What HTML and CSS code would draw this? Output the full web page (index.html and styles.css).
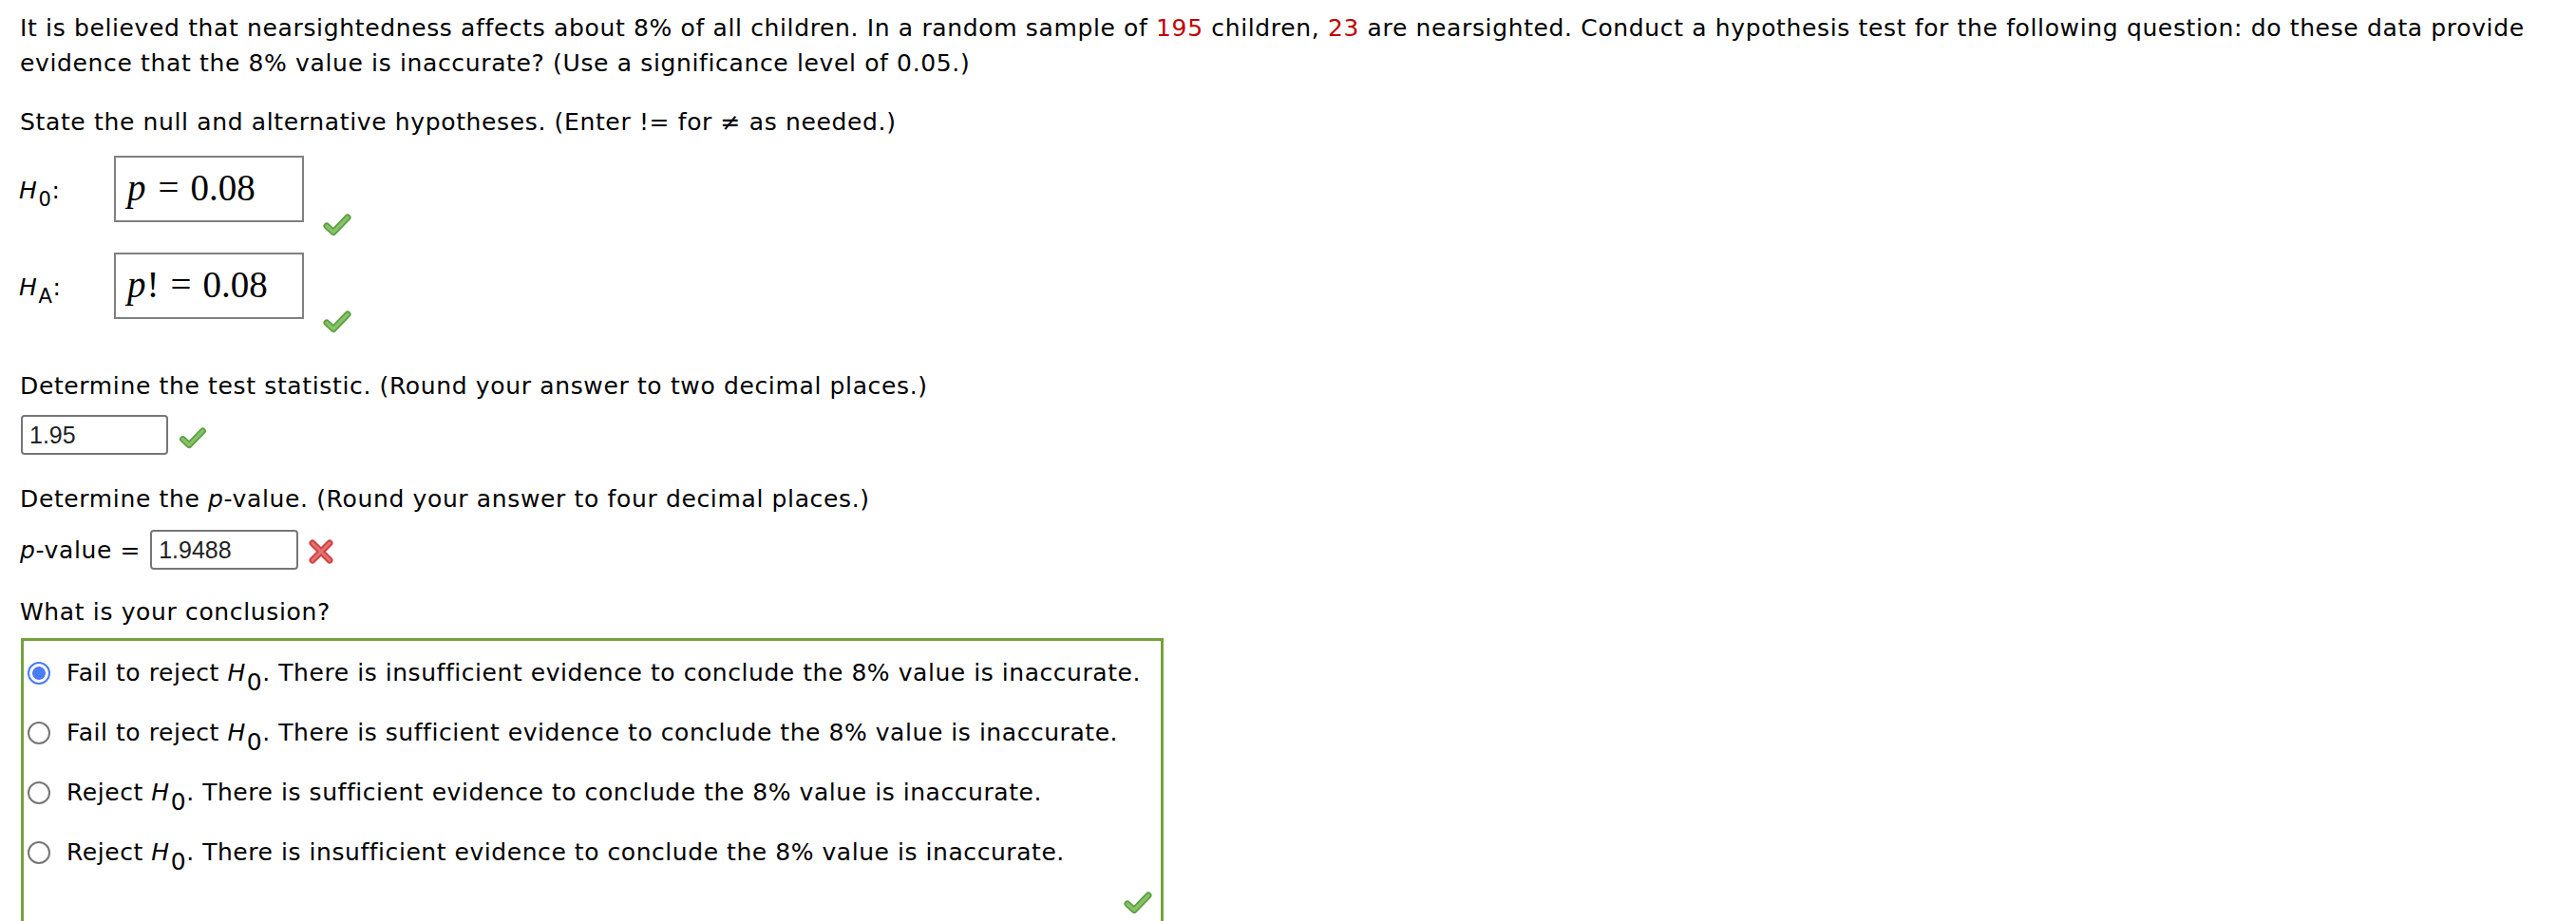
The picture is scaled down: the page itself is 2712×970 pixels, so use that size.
FILE: index.html
```html
<!DOCTYPE html>
<html>
<head>
<meta charset="utf-8">
<link rel="stylesheet" href="styles.css">
</head>
<body>
<div class="page">
  <p class="txt intro">It is believed that nearsightedness affects about 8% of all children. In a random sample of <span class="red">195</span> children, <span class="red">23</span> are nearsighted. Conduct a hypothesis test for the following question: do these data provide<br>evidence that the 8% value is inaccurate? (Use a significance level of 0.05.)</p>

  <p class="txt state">State the null and alternative hypotheses. (Enter != for &ne; as needed.)</p>

  <div class="hyp first">
    <span class="hlabel"><i>H</i><span class="hsub">0</span>:</span>
    <span class="mathbox"><i>p</i><span class="eq">=</span>0.08</span>
    <svg class="check" viewBox="0 0 30 25"><path d="M4 14 L11 20.5 L26 5" class="ck-out"/><path d="M4 14 L11 20.5 L26 5" class="ck-in"/></svg>
  </div>

  <div class="hyp second">
    <span class="hlabel"><i>H</i><span class="hsub">A</span>:</span>
    <span class="mathbox"><i>p</i>!<span class="eq">=</span>0.08</span>
    <svg class="check" viewBox="0 0 30 25"><path d="M4 14 L11 20.5 L26 5" class="ck-out"/><path d="M4 14 L11 20.5 L26 5" class="ck-in"/></svg>
  </div>

  <p class="txt det1">Determine the test statistic. (Round your answer to two decimal places.)</p>
  <div class="answer row1">
    <span class="field f1">1.95</span>
    <svg class="check small" viewBox="0 0 30 25"><path d="M4 14 L11 20.5 L26 5" class="ck-out"/><path d="M4 14 L11 20.5 L26 5" class="ck-in"/></svg>
  </div>

  <p class="txt det2">Determine the <i>p</i>-value. (Round your answer to four decimal places.)</p>
  <div class="answer row2">
    <span class="txt plabel"><i>p</i>-value =</span>
    <span class="field f2">1.9488</span>
    <svg class="cross" viewBox="0 0 28 28"><path d="M5 5 L23 23 M23 5 L5 23" class="x-out"/><path d="M5 5 L23 23 M23 5 L5 23" class="x-in"/></svg>
  </div>

  <p class="txt what">What is your conclusion?</p>

  <div class="choices">
    <div class="opt"><span class="radio on"></span><span class="txt">Fail to reject <i>H</i><span class="osub">0</span>. There is insufficient evidence to conclude the 8% value is inaccurate.</span></div>
    <div class="opt"><span class="radio"></span><span class="txt">Fail to reject <i>H</i><span class="osub">0</span>. There is sufficient evidence to conclude the 8% value is inaccurate.</span></div>
    <div class="opt"><span class="radio"></span><span class="txt">Reject <i>H</i><span class="osub">0</span>. There is sufficient evidence to conclude the 8% value is inaccurate.</span></div>
    <div class="opt"><span class="radio"></span><span class="txt">Reject <i>H</i><span class="osub">0</span>. There is insufficient evidence to conclude the 8% value is inaccurate.</span></div>
    <div class="boxfoot">
      <svg class="check" viewBox="0 0 30 25"><path d="M4 14 L11 20.5 L26 5" class="ck-out"/><path d="M4 14 L11 20.5 L26 5" class="ck-in"/></svg>
    </div>
  </div>
</div>
</body>
</html>
```

FILE: styles.css
```css
html, body {
  margin: 0;
  padding: 0;
  background: #ffffff;
}

.page {
  padding: 11px 0 0 21px;
  font-family: "DejaVu Sans", Verdana, sans-serif;
  font-size: 25px;
  color: #000;
}

.txt {
  font-family: "DejaVu Sans", Verdana, sans-serif;
  font-size: 25px;
  letter-spacing: 0.64px;
  line-height: 37px;
}

p {
  margin: 0;
  white-space: nowrap;
}

.red { color: #bf0000; }

.state { margin-top: 25px; }

.hyp {
  display: flex;
  align-items: flex-end;
  height: 70px;
  margin-left: -1px;
}
.hyp.first { margin-top: 17px; }
.hyp.second { margin-top: 32px; }

.hlabel {
  align-self: center;
  width: 100px;
  font-size: 25px;
  letter-spacing: 0.6px;
  line-height: 30px;
  margin-top: 4px;
}
.hlabel i { font-style: italic; }
.hsub {
  font-size: 21px;
  position: relative;
  top: 8px;
  margin-left: 1px;
}

.mathbox {
  box-sizing: border-box;
  width: 200px;
  height: 70px;
  border: 2px solid #808080;
  display: flex;
  align-items: center;
  padding-left: 12px;
  padding-bottom: 4px;
  font-family: "Liberation Serif", "Times New Roman", serif;
  font-size: 39px;
}
.mathbox i { font-style: italic; margin-right: 1px; }
.eq { margin: 0 12px; }

.check {
  width: 30px;
  height: 25px;
  margin-left: 20px;
  margin-bottom: -15px;
  flex: none;
}
.ck-out {
  fill: none;
  stroke: #5e9e44;
  stroke-width: 7;
  stroke-linecap: round;
  stroke-linejoin: round;
}
.ck-in {
  fill: none;
  stroke: #84c464;
  stroke-width: 3.5;
  stroke-linecap: round;
  stroke-linejoin: round;
}

.det1 { margin-top: 52px; }

.answer {
  display: flex;
  align-items: center;
}
.row1 { margin-top: 12px; margin-left: 1px; height: 42px; }
.row1 .check.small { margin: 6px 0 0 11px; width: 30px; height: 24px; }

.field {
  box-sizing: border-box;
  height: 42px;
  border: 2px solid #767676;
  border-radius: 4px;
  display: flex;
  align-items: center;
  padding-left: 7px;
  font-family: "Liberation Sans", Arial, sans-serif;
  font-size: 25px;
  color: #222;
}
.f1 { width: 155px; }
.f2 { width: 156px; }

.det2 { margin-top: 28px; }

.row2 { margin-top: 14px; height: 42px; }
.plabel { margin-right: 10px; }
.cross {
  width: 28px;
  height: 28px;
  margin-left: 10px;
  margin-top: 4px;
}
.x-out {
  fill: none;
  stroke: #cf4444;
  stroke-width: 7;
  stroke-linecap: round;
}
.x-in {
  fill: none;
  stroke: #e67070;
  stroke-width: 3;
  stroke-linecap: round;
}

.what { margin-top: 26px; }

.choices {
  box-sizing: border-box;
  width: 1203px;
  margin-top: 9px;
  margin-left: 1px;
  border: 3px solid #76a13d;
  padding-top: 3px;
  padding-bottom: 40px;
}

.opt {
  display: flex;
  align-items: center;
  height: 63px;
  padding-left: 4px;
}
.opt:first-child { margin-top: -1px; }
.opt .txt { margin-left: 17px; letter-spacing: 0.55px; }
.osub {
  position: relative;
  top: 10px;
  margin-left: 1px;
}

.radio {
  box-sizing: border-box;
  width: 24px;
  height: 24px;
  border-radius: 50%;
  border: 2px solid #767676;
  background: #fff;
  flex: none;
}
.radio.on {
  border: 2.5px solid #4a7cf6;
  background: radial-gradient(circle, #4a7cf6 0 6.5px, #ffffff 7.2px);
}

.boxfoot {
  display: flex;
  justify-content: flex-end;
  padding-right: 9px;
  margin-top: 9px;
  height: 10px;
}
.boxfoot .check { margin: 0; }
```
